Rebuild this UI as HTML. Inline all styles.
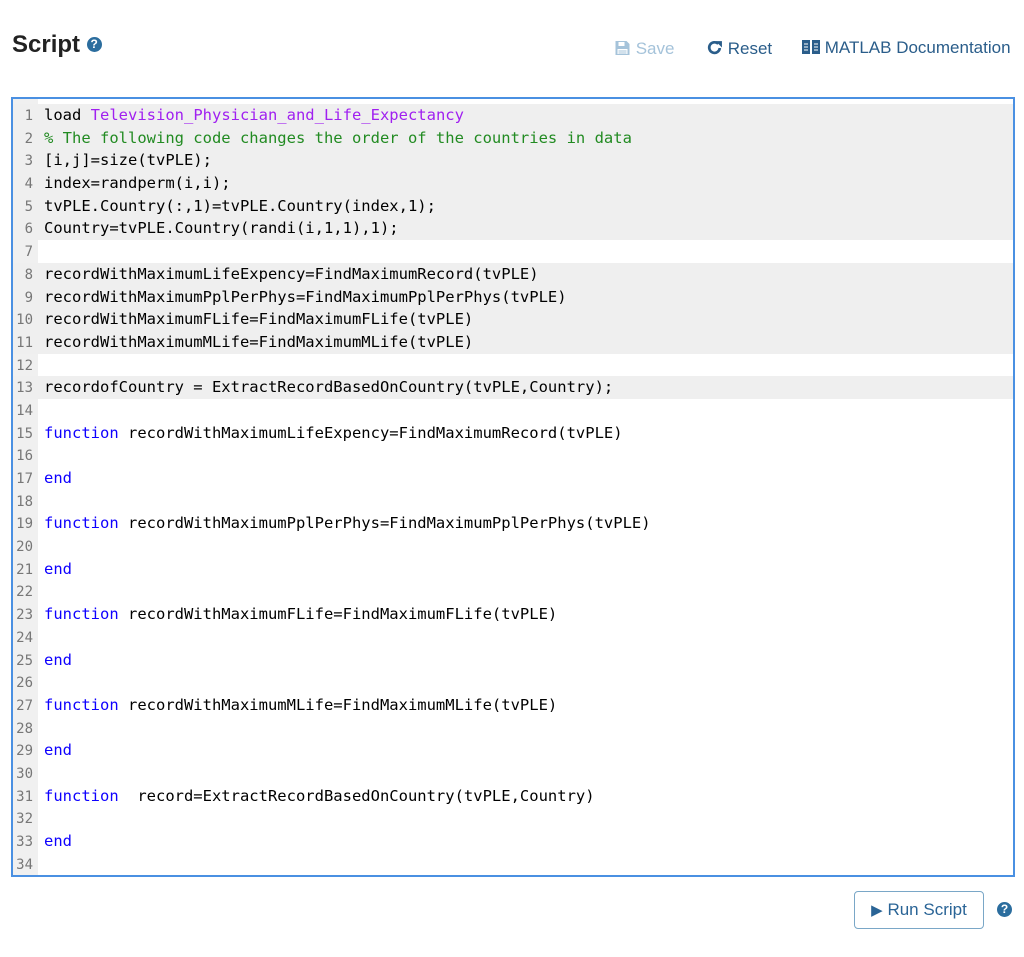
<!DOCTYPE html>
<html><head><meta charset="utf-8"><style>
body{margin:0;background:#fff;width:1024px;height:957px;position:relative;font-family:"Liberation Sans",sans-serif;overflow:hidden}
.title{position:absolute;left:12px;top:31px;font-size:24px;font-weight:bold;color:#222}
.q{display:inline-block;width:15px;height:15px;border-radius:50%;background:#2b6d9e;color:#fff;font-size:12px;font-weight:bold;text-align:center;line-height:15px;vertical-align:top}
.tb{position:absolute;top:39px;font-size:17px;color:#2a5d8a}
.ed{position:absolute;left:11px;top:97px;width:1000px;height:776px;border:2px solid #4a90e2;overflow:hidden}
.gut{position:absolute;left:0;top:0;width:25px;height:100%;background:#f0f0f0}
.lines{position:absolute;left:0;top:5px;right:0;font-family:"DejaVu Sans Mono",monospace;font-size:15.5px}
.l{height:22.7px;line-height:22.7px;white-space:pre;position:relative}
.l.s{background:#efefef}
.n{display:inline-block;width:20px;text-align:right;color:#777;font-size:14px;margin-right:11px}
.k{color:#0e00ff}.c{color:#228b22}.p{color:#a020f0}
.btn{position:absolute;left:854px;top:891px;width:130px;height:38px;border:1px solid #7aa7c7;border-radius:4px;box-sizing:border-box;color:#2a6496;font-size:17px;line-height:36px;text-align:center}
</style></head><body>
<div class="title">Script <span class="q" style="margin-top:6px">?</span></div>
<div class="tb" style="left:614px;color:#a5c3da"><svg width="17" height="16" viewBox="0 0 16 16" style="vertical-align:-2px"><path d="M1 1h11l3 3v11H1z" fill="#a5c3da"/><rect x="4" y="2" width="6" height="4" fill="#fff"/><rect x="3" y="9" width="10" height="5" fill="#fff"/><path d="M4 11h8M4 13h8" stroke="#a5c3da"/></svg> Save</div>
<div class="tb" style="left:706px"><svg width="17" height="17" viewBox="0 0 16 16" style="vertical-align:-2px"><path d="M13 8.5A5 5 0 1 1 11.5 4.5" fill="none" stroke="#2a5d8a" stroke-width="2.5"/><path d="M9 2h6v6z" fill="#2a5d8a"/></svg> Reset</div>
<div class="tb" style="left:802px;top:38px"><svg width="18" height="16" viewBox="0 0 18 16" style="vertical-align:-2px"><rect x="0" y="1" width="8" height="14" fill="#2a5d8a"/><rect x="10" y="1" width="8" height="14" fill="#2a5d8a"/><path d="M2 5h4M2 8h4M2 11h4M12 5h4M12 8h4M12 11h4" stroke="#fff"/></svg> MATLAB Documentation</div>
<div class="ed"><div class="lines">
<div class="l s"><span class="n">1</span>load <span class="p">Television_Physician_and_Life_Expectancy</span></div>
<div class="l s"><span class="n">2</span><span class="c">% The following code changes the order of the countries in data</span></div>
<div class="l s"><span class="n">3</span>[i,j]=size(tvPLE);</div>
<div class="l s"><span class="n">4</span>index=randperm(i,i);</div>
<div class="l s"><span class="n">5</span>tvPLE.Country(:,1)=tvPLE.Country(index,1);</div>
<div class="l s"><span class="n">6</span>Country=tvPLE.Country(randi(i,1,1),1);</div>
<div class="l"><span class="n">7</span></div>
<div class="l s"><span class="n">8</span>recordWithMaximumLifeExpency=FindMaximumRecord(tvPLE)</div>
<div class="l s"><span class="n">9</span>recordWithMaximumPplPerPhys=FindMaximumPplPerPhys(tvPLE)</div>
<div class="l s"><span class="n">10</span>recordWithMaximumFLife=FindMaximumFLife(tvPLE)</div>
<div class="l s"><span class="n">11</span>recordWithMaximumMLife=FindMaximumMLife(tvPLE)</div>
<div class="l"><span class="n">12</span></div>
<div class="l s"><span class="n">13</span>recordofCountry = ExtractRecordBasedOnCountry(tvPLE,Country);</div>
<div class="l"><span class="n">14</span></div>
<div class="l"><span class="n">15</span><span class="k">function</span> recordWithMaximumLifeExpency=FindMaximumRecord(tvPLE)</div>
<div class="l"><span class="n">16</span></div>
<div class="l"><span class="n">17</span><span class="k">end</span></div>
<div class="l"><span class="n">18</span></div>
<div class="l"><span class="n">19</span><span class="k">function</span> recordWithMaximumPplPerPhys=FindMaximumPplPerPhys(tvPLE)</div>
<div class="l"><span class="n">20</span></div>
<div class="l"><span class="n">21</span><span class="k">end</span></div>
<div class="l"><span class="n">22</span></div>
<div class="l"><span class="n">23</span><span class="k">function</span> recordWithMaximumFLife=FindMaximumFLife(tvPLE)</div>
<div class="l"><span class="n">24</span></div>
<div class="l"><span class="n">25</span><span class="k">end</span></div>
<div class="l"><span class="n">26</span></div>
<div class="l"><span class="n">27</span><span class="k">function</span> recordWithMaximumMLife=FindMaximumMLife(tvPLE)</div>
<div class="l"><span class="n">28</span></div>
<div class="l"><span class="n">29</span><span class="k">end</span></div>
<div class="l"><span class="n">30</span></div>
<div class="l"><span class="n">31</span><span class="k">function</span>  record=ExtractRecordBasedOnCountry(tvPLE,Country)</div>
<div class="l"><span class="n">32</span></div>
<div class="l"><span class="n">33</span><span class="k">end</span></div>
<div class="l"><span class="n">34</span></div>
</div><div class="gut" style="z-index:-1"></div></div>
<div class="btn"><span style="font-size:15px">&#9654;</span> Run Script</div>
<span class="q" style="position:absolute;left:997px;top:902px">?</span>
</body></html>
